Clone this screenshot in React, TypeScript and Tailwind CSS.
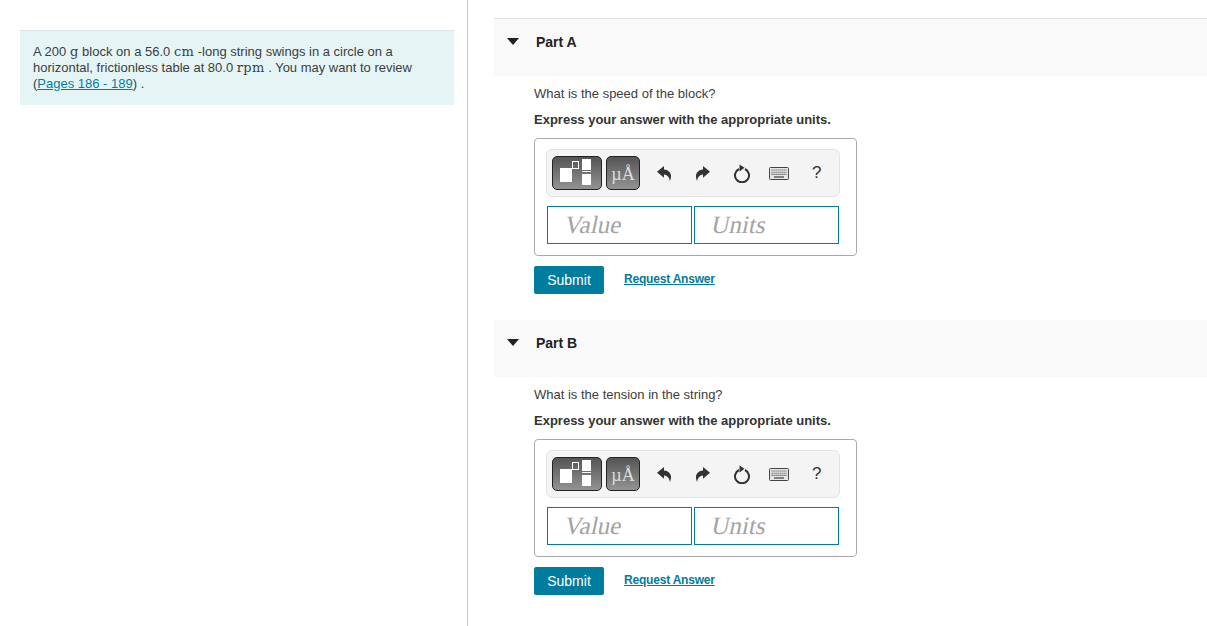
const sans = { fontFamily: '"Liberation Sans", Arial, sans-serif' }

function Math1({ children }: { children: string }) {
  return <span className="font-['DejaVu_Serif',serif] text-[13px] leading-none tracking-[0.3px]">{children}</span>
}

function TemplateIcon() {
  return (
    <svg width="48" height="32" viewBox="0 0 48 32" aria-hidden="true">
      <rect x="7" y="11" width="12" height="14" fill="#fff" />
      <rect x="19.5" y="4.5" width="6" height="7" fill="none" stroke="#fff" strokeWidth="1" />
      <rect x="29" y="2" width="9" height="11" fill="#fff" />
      <rect x="29" y="14" width="9" height="1" fill="#fff" />
      <rect x="29" y="17" width="9" height="11" fill="#fff" />
    </svg>
  )
}

function UndoIcon({ flip }: { flip?: boolean }) {
  return (
    <svg width="14" height="15" viewBox="0 0 14 15" className={flip ? '-scale-x-100' : ''} aria-hidden="true">
      <path d="M0 5.8 L7 0 V3.4 C11 3.4 14 6.4 14 10 C14 12 13.5 13.8 12.8 15 C12.6 12 11 9 7 8.6 V11.8 Z" fill="#333" />
    </svg>
  )
}

function ResetIcon() {
  return (
    <svg width="18" height="19" viewBox="0 0 18 19" aria-hidden="true">
      <path d="M6 5 A7 7 0 1 0 12 5" fill="none" stroke="#333" strokeWidth="2" />
      <path d="M6.5 0.5 L11.5 3.8 L6.5 7.5 Z" fill="#333" />
    </svg>
  )
}

function KeyboardIcon() {
  return (
    <svg width="20" height="13" viewBox="0 0 20 13" aria-hidden="true">
      <rect x="0.5" y="0.5" width="19" height="12" rx="1" fill="#e6e6e6" stroke="#444" />
      <path d="M2.5 3 H17.5 M2.5 5.2 H17.5 M2.5 7.4 H17.5" stroke="#555" strokeWidth="1.1" strokeDasharray="1.2 0.8" />
      <path d="M5 10 H15" stroke="#555" strokeWidth="1.4" />
    </svg>
  )
}

function Part({ label, question, first }: { label: string; question: string; first?: boolean }) {
  return (
    <section className={first ? 'h-[302px]' : 'h-[306px]'}>
      <div className={`flex items-start bg-[#f9f9f9] pt-[13px] ${first ? 'h-[58px] border-t border-[#e2e2e2]' : 'h-[57px]'}`}>
        <svg width="12" height="7" viewBox="0 0 12 7" className="ml-[13px] mt-[6px]" aria-hidden="true">
          <path d="M0 0 H12 L6 7 Z" fill="#222" />
        </svg>
        <h2 className="ml-[17px] text-[14px] font-bold leading-[20px] text-[#222]">{label}</h2>
      </div>
      <div className="ml-[40px]">
        <p className="mt-[9px] text-[13px] leading-[18px] text-[#3d3d3d]">{question}</p>
        <p className="mt-[8px] text-[13px] font-bold leading-[18px] text-[#333]">Express your answer with the appropriate units.</p>
        <div className="mt-[9px] h-[118px] w-[323px] rounded-[4px] border border-[#aaa] px-[11px] pt-[10px]">
          <div className="flex h-[48px] w-[294px] items-center rounded-[6px] border border-[#e4e4e4] bg-[#f4f4f4] pl-[5px]">
            <div className="flex h-[34px] w-[50px] items-center justify-center rounded-[5px] border border-[#222] bg-gradient-to-b from-[#555555] to-[#939393]">
              <TemplateIcon />
            </div>
            <div className="ml-[4px] flex h-[34px] w-[34px] items-center justify-center rounded-[5px] border border-[#222] bg-gradient-to-b from-[#555555] to-[#939393] pt-[2px] font-['Liberation_Serif',serif] text-[18px] text-[#ddd]">
              µÅ
            </div>
            <div className="ml-[17px]"><UndoIcon /></div>
            <div className="ml-[25px]"><UndoIcon flip /></div>
            <div className="ml-[23px]"><ResetIcon /></div>
            <div className="ml-[18px]"><KeyboardIcon /></div>
            <div className="ml-[23px] text-[17px] text-[#333]">?</div>
          </div>
          <div className="mt-[9px] flex gap-[2px] pl-[1px]">
            {['Value', 'Units'].map((name) => (
              <div
                key={name}
                className="flex h-[38px] w-[145px] items-center border border-[#007c9e] pl-[17px] text-[#a3a3a3]"
              >
                <span className="inline-block -skew-x-12 font-['Liberation_Serif',serif] text-[25px]">{name}</span>
              </div>
            ))}
          </div>
        </div>
        <div className="mt-[10px] flex items-start">
          <button type="button" className="h-[28px] w-[70px] rounded-[2px] bg-[#007c9e] text-[14px] text-white">
            Submit
          </button>
          <a href="#" className="ml-[20px] mt-[4px] text-[12px] font-bold leading-[18px] tracking-[-0.2px] text-[#007c9e] underline">
            Request Answer
          </a>
        </div>
      </div>
    </section>
  )
}

export default function App() {
  return (
    <div className="flex h-[626px] w-[1207px] overflow-hidden bg-white" style={sans}>
      <aside className="h-full w-[468px] border-r border-[#c8c8c8] pl-[20px] pt-[30px]">
        <div className="h-[75px] w-[434px] border-t border-[#dde5ea] bg-[#e5f5f6] px-[13px] pt-[13px] text-[13px] leading-[16px] text-[#3d3d3d]">
          A 200 <Math1>g</Math1> block on a 56.0 <Math1>cm</Math1> -long string swings in a circle on a horizontal, frictionless table at 80.0 <Math1>rpm</Math1> . You may want to review{' '}
          (<a href="#" className="text-[#007c9e] underline">Pages 186 - 189</a>) .
        </div>
      </aside>
      <main className="ml-[26px] flex-1 pt-[18px]">
        <Part label="Part A" question="What is the speed of the block?" first />
        <Part label="Part B" question="What is the tension in the string?" />
      </main>
    </div>
  )
}
